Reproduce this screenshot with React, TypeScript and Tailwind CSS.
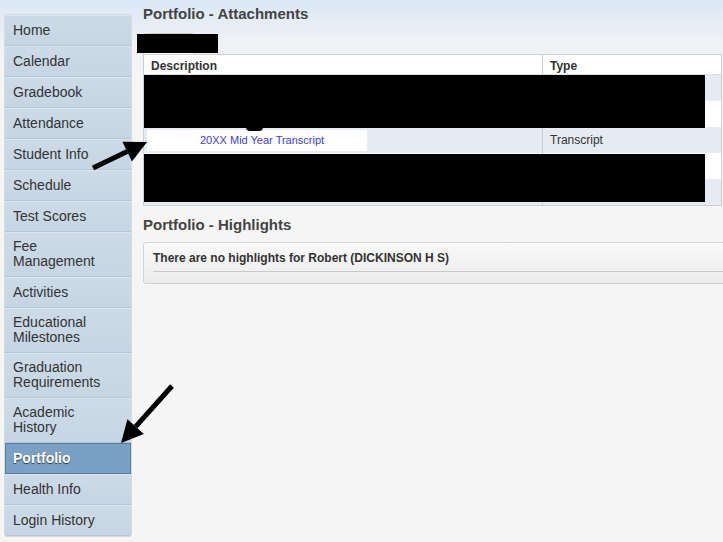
import React from "react";

const navItems = [
  "Home",
  "Calendar",
  "Gradebook",
  "Attendance",
  "Student Info",
  "Schedule",
  "Test Scores",
  "Fee Management",
  "Activities",
  "Educational Milestones",
  "Graduation Requirements",
  "Academic History",
  "Portfolio",
  "Health Info",
  "Login History",
];

const twoLine = ["Fee Management", "Educational Milestones", "Graduation Requirements", "Academic History"];

const rows = [
  { desc: "", type: "", shade: true },
  { desc: "", type: "", shade: false },
  { desc: "20XX Mid Year Transcript", type: "Transcript", shade: true },
  { desc: "", type: "", shade: false },
  { desc: "", type: "", shade: true },
];

const Arrow = ({ x1, y1, x2, y2 }: { x1: number; y1: number; x2: number; y2: number }) => {
  const ang = Math.atan2(y2 - y1, x2 - x1);
  const len = 22;
  const w = 11;
  const bx = x2 - len * Math.cos(ang);
  const by = y2 - len * Math.sin(ang);
  const px = -Math.sin(ang) * w;
  const py = Math.cos(ang) * w;
  return (
    <g>
      <line x1={x1} y1={y1} x2={bx} y2={by} stroke="black" strokeWidth="5" />
      <polygon points={`${x2},${y2} ${bx + px},${by + py} ${bx - px},${by - py}`} fill="black" />
    </g>
  );
};

export default function App() {
  return (
    <div
      className="relative w-[723px] h-[542px] overflow-hidden bg-gradient-to-b from-[#dbe8f6] via-[#eef1f5] to-[#f5f5f5] bg-[length:100%_80px] bg-no-repeat bg-[#f5f5f5] text-[#333]"
      style={{ fontFamily: '"Liberation Sans", Arial, sans-serif' }}
    >
      <div className="flex items-start">
        {/* Side nav */}
        <ul className="shrink-0 ml-[4px] mt-[14px] w-[128px] border border-[#d4dbe3] rounded-[3px] bg-[#c9d8e6] overflow-hidden">
          {navItems.map((item) => {
            const active = item === "Portfolio";
            const two = twoLine.includes(item);
            return (
              <li
                key={item}
                className={
                  active
                    ? "px-[7px] pt-[7px] pb-[7px] text-[14px] leading-[15px] font-bold text-white bg-[#7aa1c4] border border-[#587c9c] [text-shadow:0_1px_1px_#334]"
                    : `px-[8px] ${two ? "pt-[7px]" : "pt-[8px]"} pb-[7px] text-[14px] leading-[15px] text-[#333] bg-gradient-to-b from-[#cddbe8] to-[#c6d5e3] border-b border-[#b7c6d5] shadow-[inset_0_1px_0_#dbe5ef]`
                }
              >
                {two ? (
                  <>
                    {item.split(" ")[0]}
                    <br />
                    {item.split(" ").slice(1).join(" ")}
                  </>
                ) : (
                  item
                )}
              </li>
            );
          })}
        </ul>

        {/* Main */}
        <main className="ml-[10px] flex-1 min-w-0 flex flex-col">
          <h1 className="mt-[6px] ml-[1px] text-[15px] leading-[16px] font-bold text-[#444]">Portfolio - Attachments</h1>

          {/* tabs */}
          <div className="relative mt-[11px] h-[21px]">
            <div className="absolute left-[1px] top-0 w-[52px] h-[21px] border border-[#ccc] border-b-0 rounded-t-[4px] bg-white" />
            <div className="absolute left-[-5px] top-[1px] w-[81px] h-[19px] bg-black" />
          </div>

          {/* table */}
          <div className="relative ml-[1px] w-[579px] border border-[#cfcfcf] bg-white text-[12px]">
            <div className="flex h-[20px] items-center font-bold text-[#333] bg-white border-b border-[#ddd]">
              <div className="w-[399px] pl-[7px] border-r border-[#ccc] h-full flex items-center pt-[3px]">Description</div>
              <div className="flex-1 pl-[7px] h-full flex items-center pt-[3px]">Type</div>
            </div>
            {rows.map((r, i) => (
              <div key={i} className={`flex h-[26px] ${r.shade ? "bg-[#e6ebf3]" : "bg-white"}`}>
                <div className="w-[399px] border-r border-[#ccc] h-full flex items-center">
                  {r.desc && (
                    <div className="ml-[3px] w-[220px] h-[21px] bg-white flex items-center pl-[53px] text-[11px] text-[#3c3cf0]">
                      {r.desc}
                    </div>
                  )}
                </div>
                <div className="flex-1 pl-[7px] h-full flex items-center text-[12px] text-[#333]">{r.type}</div>
              </div>
            ))}
            {/* redactions */}
            <div className="absolute left-0 top-[20px] w-[561px] h-[53px] bg-black" />
            <div className="absolute left-[102px] top-[72px] w-[17px] h-[4px] rounded-b-full bg-black" />
            <div className="absolute left-0 top-[99px] w-[561px] h-[48px] bg-black" />
          </div>

          <h2 className="mt-[11px] ml-[1px] text-[15px] leading-[16px] font-bold text-[#444]">Portfolio - Highlights</h2>

          <div className="mt-[9px] ml-[1px] w-[590px] h-[42px] border border-[#d4d4d4] rounded-[3px] bg-gradient-to-b from-[#f9f9f9] to-[#ececec] px-[9px] pt-[8px]">
            <div className="text-[12px] leading-[14px] font-bold text-[#333] pb-[6px] border-b border-[#c8c8c8]">
              There are no highlights for Robert (DICKINSON H S)
            </div>
          </div>
        </main>
      </div>

      {/* annotation arrows */}
      <svg className="absolute inset-0 pointer-events-none" width="723" height="542">
        <Arrow x1={93} y1={168} x2={147} y2={142} />
        <Arrow x1={172} y1={386} x2={121} y2={443} />
      </svg>
    </div>
  );
}
